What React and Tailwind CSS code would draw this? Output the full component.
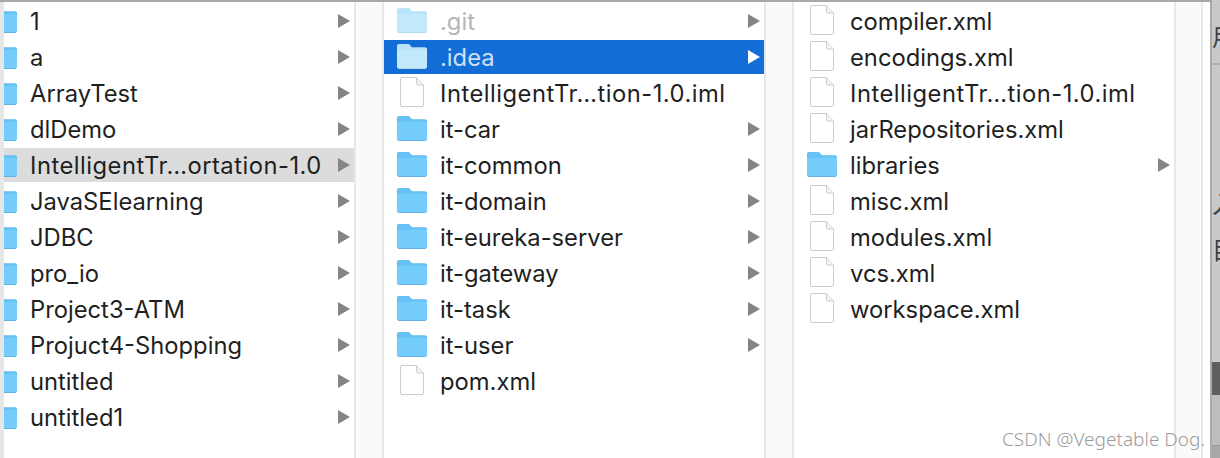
const col1 = [
  ["folder", "1"],
  ["folder", "a"],
  ["folder", "ArrayTest"],
  ["folder", "dlDemo"],
  ["folder", "IntelligentTr…ortation-1.0", "gray"],
  ["folder", "JavaSElearning"],
  ["folder", "JDBC"],
  ["folder", "pro_io"],
  ["folder", "Project3-ATM"],
  ["folder", "Projuct4-Shopping"],
  ["folder", "untitled"],
  ["folder", "untitled1"],
];

const col2 = [
  ["hidden", ".git"],
  ["hidden", ".idea", "blue"],
  ["file", "IntelligentTr…tion-1.0.iml"],
  ["folder", "it-car"],
  ["folder", "it-common"],
  ["folder", "it-domain"],
  ["folder", "it-eureka-server"],
  ["folder", "it-gateway"],
  ["folder", "it-task"],
  ["folder", "it-user"],
  ["file", "pom.xml"],
];

const col3 = [
  ["file", "compiler.xml"],
  ["file", "encodings.xml"],
  ["file", "IntelligentTr…tion-1.0.iml"],
  ["file", "jarRepositories.xml"],
  ["folder", "libraries"],
  ["file", "misc.xml"],
  ["file", "modules.xml"],
  ["file", "vcs.xml"],
  ["file", "workspace.xml"],
];

function FolderIcon({ hidden }) {
  const back = hidden ? "#b9e3fa" : "#66c1f5";
  const front = hidden ? "#c3e9fc" : "#74cdfb";
  const edge = hidden ? "#a9d4ea" : "#5ba9d8";
  return (
    <svg width="30" height="25" viewBox="0 0 30 25" className="shrink-0">
      <path d="M0 2.500C0 1 1 0 2.500 0h8c1 0 1.500 .3 2.200 1L15 3.500h13C29.300 3.500 30 4.300 30 5.500v17c0 1.500-1 2.500-2.500 2.500h-25C1 25 0 24 0 22.500z" fill={edge} />
      <path d="M0 2.500C0 1 1 0 2.500 0h8c1 0 1.500 .3 2.200 1L15 3.500h13C29.300 3.500 30 4.300 30 5.500V8H0z" fill={back} />
      <path d="M0 6h30v16.500c0 1-.8 1.700-2 1.700H2c-1.200 0-2-.7-2-1.700z" fill={front} />
    </svg>
  );
}

function FileIcon() {
  return (
    <svg width="24" height="30" viewBox="0 0 24 30" className="shrink-0">
      <path d="M.5 2A1.500 1.500 0 0 1 2 .5h14.500l7 7.500v20a1.500 1.500 0 0 1-1.500 1.500H2A1.500 1.500 0 0 1 .5 28z" fill="#ffffff" stroke="#cdcdcd" />
      <path d="M16.500 .5v6a1.500 1.500 0 0 0 1.500 1.500h5.500" fill="#f3f3f3" stroke="#cdcdcd" />
    </svg>
  );
}

function Arrow({ color }) {
  return (
    <svg width="12" height="14" viewBox="0 0 12 14" className="shrink-0">
      <path d="M0 0L12 7L0 14z" fill={color} />
    </svg>
  );
}

function Row({ kind, name, highlight, clipped }) {
  const isFolder = kind !== "file";
  const bg = highlight === "blue" ? "bg-[#126dd6]" : highlight === "gray" ? "bg-[#dcdcdc]" : "";
  const text =
    highlight === "blue"
      ? "text-[#cfe0f7]"
      : kind === "hidden"
        ? "text-[#b5b5b5]"
        : "text-[#1f1f1f]";
  const spacing = name.includes("…") ? "tracking-[0.5px]" : "";
  return (
    <div className="h-9 py-px">
      <div className={`flex h-[34px] items-center ${bg}`}>
        {clipped ? (
          <div className="mr-[13px] flex w-[13px] shrink-0 -translate-y-px justify-end overflow-hidden">
            <FolderIcon />
          </div>
        ) : (
          <div className="flex w-[56px] shrink-0 -translate-y-px justify-center">
            {isFolder ? <FolderIcon hidden={kind === "hidden"} /> : <FileIcon />}
          </div>
        )}
        <span className={`flex-1 translate-y-px whitespace-nowrap ${spacing} ${text}`}>{name}</span>
        {isFolder && (
          <span className="pr-1">
            <Arrow color={highlight === "blue" ? "#ffffff" : "#858585"} />
          </span>
        )}
      </div>
    </div>
  );
}

function Gutter() {
  return <div className="w-[30px] border-x-2 border-[#e8e8e8] bg-[#fafafa]" />;
}

export default function App() {
  return (
    <div className="relative flex h-[458px] w-[1220px] overflow-hidden bg-white font-['Inter',sans-serif] text-[23.75px]">
      <div className="flex flex-1 flex-col">
        <div className="h-[2px] bg-[#a8a8a8]" />
        <div className="flex flex-1">
          <div className="w-1 bg-[#e6e6e6]" />
          <div className="w-[350px] pt-px">
            {col1.map(([kind, name, hl]) => (
              <Row key={name} kind={kind} name={name} highlight={hl} clipped />
            ))}
          </div>
          <Gutter />
          <div className="w-[380px] pt-px">
            {col2.map(([kind, name, hl]) => (
              <Row key={name} kind={kind} name={name} highlight={hl} />
            ))}
          </div>
          <Gutter />
          <div className="w-[380px] pt-px">
            {col3.map(([kind, name, hl]) => (
              <Row key={name} kind={kind} name={name} highlight={hl} />
            ))}
          </div>
          <div className="w-[29px] border-x-2 border-[#e8e8e8] bg-[#fafafa]" />
          <div className="w-[7px]" />
        </div>
      </div>

      {/* sliver of the window behind */}
      <div className="flex w-[10px] flex-col overflow-hidden border-l-2 border-[#a9a9a9] bg-[#c9c9c9] font-['Noto_Sans_CJK_SC',sans-serif] text-[24px] leading-[28px] text-[#3d3d44]">
        <div className="h-[65px] shrink-0 border-b-2 border-[#aeaeae] pt-[22px]">用</div>
        <div className="mt-[124px] h-[28px] shrink-0">入</div>
        <div className="mt-[18px] h-[28px] shrink-0">目</div>
        <div className="mt-[99px] h-[33px] shrink-0 bg-[#5e5e5e]" />
        <div className="h-[50px] shrink-0 bg-[#bdbdbd]" />
        <div className="h-[13px] shrink-0 border-t border-[#9a9a9a] bg-[#a8a8a8]" />
      </div>

      <div className="absolute left-[1002px] top-[427px] font-['Noto_Sans',sans-serif] text-[19px] font-light leading-6 whitespace-nowrap text-[#9c9c9c]">
        CSDN @Vegetable Dog.
      </div>
    </div>
  );
}
